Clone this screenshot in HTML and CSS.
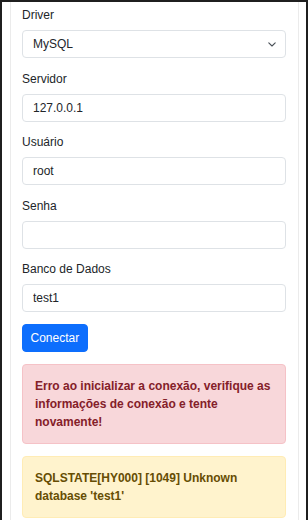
FILE: index.html
```html
<!DOCTYPE html>
<html>
    <head>
        <meta charset="utf-8">
        <title>Conexão</title>
        <link rel="stylesheet" href="styles.css">
    </head>
    <body>
        <div id="frame">
            <div id="card">
                <form id="conn-form">
                    <div class="group">
                        <label class="label" for="driver">Driver</label>
                        <div class="select-wrap">
                            <select id="driver" class="field select">
                                <option>MySQL</option>
                            </select>
                            <svg class="chevron" width="8" height="5" viewBox="0 0 8 5">
                                <path d="M0.8 0.8 4 4 7.2 0.8" fill="none" stroke="#495057" stroke-width="1.1" stroke-linecap="round" stroke-linejoin="round"/>
                            </svg>
                        </div>
                    </div>
                    <div class="group">
                        <label class="label" for="server">Servidor</label>
                        <input id="server" class="field" type="text" value="127.0.0.1">
                    </div>
                    <div class="group">
                        <label class="label" for="user">Usuário</label>
                        <input id="user" class="field" type="text" value="root">
                    </div>
                    <div class="group">
                        <label class="label" for="pass">Senha</label>
                        <input id="pass" class="field" type="password" value="">
                    </div>
                    <div class="group">
                        <label class="label" for="db">Banco de Dados</label>
                        <input id="db" class="field" type="text" value="test1">
                    </div>
                    <button type="button" id="connect">Conectar</button>
                </form>
                <div class="alert alert-danger">Erro ao inicializar a conexão, verifique as informações de conexão e tente novamente!</div>
                <div class="alert alert-warning">SQLSTATE[HY000] [1049] Unknown database 'test1'</div>
            </div>
        </div>
    </body>
</html>
```

FILE: styles.css
```css
html, body {
    margin: 0px;
    padding: 0px;
    background-color: #fff;
}
body {
    font-family: "Segoe UI", "Liberation Sans", Arial, sans-serif;
    font-size: 12px;
    line-height: 18px;
    color: #212529;
}
#frame {
    height: 518px;
    overflow: hidden;
    border: solid 2px #1f1f1f;
    border-bottom: none;
    padding: 0px 7px 0px 8px;
}
#card {
    height: 100%;
    border-left: solid 1px #ebebeb;
    border-right: solid 1px #ebebeb;
    padding: 4px 12px 0px 11px;
}
.group {
    margin-bottom: 11.5px;
}
.label {
    display: block;
    margin-bottom: 6px;
}
.field {
    display: block;
    box-sizing: border-box;
    width: 100%;
    height: 28px;
    margin: 0px;
    padding: 0px 10px;
    border: solid 1px #dee2e6;
    border-radius: 4px;
    background-color: #fff;
    font-family: inherit;
    font-size: 12px;
    color: #212529;
    outline: none;
}
.select-wrap {
    position: relative;
}
.select {
    appearance: none;
    -webkit-appearance: none;
    padding-right: 28px;
}
.chevron {
    position: absolute;
    right: 10px;
    top: 12px;
    pointer-events: none;
}
#connect {
    display: block;
    height: 28px;
    margin: 0px 0px 12px 0px;
    padding: 0px 7.5px;
    border: solid 1px #0d6efd;
    border-radius: 4px;
    background-color: #0d6efd;
    color: #fff;
    font-family: inherit;
    font-size: 12px;
}
.alert {
    padding: 12px;
    margin-bottom: 12px;
    border: solid 1px transparent;
    border-radius: 4px;
    font-weight: bold;
}
.alert-danger {
    background-color: #f8d7da;
    border-color: #f5c2c7;
    color: #842029;
}
.alert-warning {
    background-color: #fff3cd;
    border-color: #ffecb5;
    color: #664d03;
}
```
